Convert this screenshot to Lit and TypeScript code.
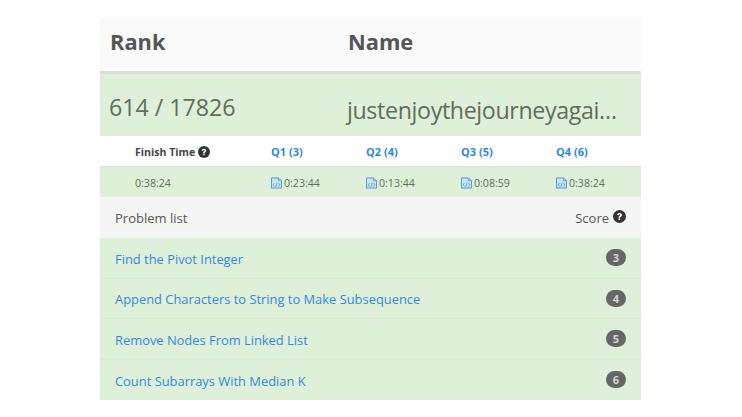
import { LitElement, html, css, svg } from "lit";
import { customElement } from "lit/decorators.js";

const help = html`<svg class="help" viewBox="0 0 24 24" aria-hidden="true"><circle cx="12" cy="12" r="12" fill="currentColor"/><path d="M7.6 9.3c.2-2.5 2-3.9 4.5-3.9 2.6 0 4.5 1.5 4.5 3.7 0 1.6-.9 2.4-2.1 3.2-1 .7-1.3 1.1-1.3 2v.2h-3v-.6c0-1.6.7-2.4 1.8-3.2.9-.6 1.4-1 1.4-1.7s-.6-1.2-1.3-1.2c-.9 0-1.4.6-1.5 1.7z" fill="#fff"/><rect x="10.2" y="15.4" width="3" height="3" fill="#fff"/></svg>`;

const fileIcon = html`<svg class="file" viewBox="0 0 12 12" aria-hidden="true">${svg`<path d="M.5.5h7.5l3.5 3v8H.5z" fill="#cfe3f4" stroke="#3f93e0" stroke-width="1"/><path d="M8 .5v3h3.5" fill="none" stroke="#3f93e0" stroke-width=".8"/><path d="M3.8 6 2.4 8l1.4 2M8.2 6l1.4 2-1.4 2M6.7 5.5 5.3 10.5" fill="none" stroke="#3f93e0" stroke-width=".8"/>`}</svg>`;

const questions = [
  { label: "Q1 (3)", time: "0:23:44" },
  { label: "Q2 (4)", time: "0:13:44" },
  { label: "Q3 (5)", time: "0:08:59" },
  { label: "Q4 (6)", time: "0:38:24" },
];
const problems = [
  { name: "Find the Pivot Integer", score: 3 },
  { name: "Append Characters to String to Make Subsequence", score: 4 },
  { name: "Remove Nodes From Linked List", score: 5 },
  { name: "Count Subarrays With Median K", score: 6 },
];

@customElement("app-root")
export class AppRoot extends LitElement {
  static styles = css`
    :host {
      display: block;
      height: 417px;
      overflow: hidden;
      background: #fff;
      font-family: "Open Sans", "Noto Sans", sans-serif;
      color: #555;
    }
    .wrap {
      margin: 0 101px 0 100px;
      padding-top: 17px;
    }
    .head {
      background: #f9f9f9;
      border-bottom: 3px solid #ddd;
      height: 54px;
      box-sizing: content-box;
      display: grid;
      grid-template-columns: 238px 1fr;
      align-items: center;
      font-size: 21.8px;
      font-weight: 700;
      color: #555;
      line-height: 50px;
    }
    .head span { padding: 0 9px 6px 10px; }
    .main {
      background: #dff0d8;
      height: 62px;
      box-sizing: border-box;
      padding-top: 4px;
      display: grid;
      grid-template-columns: 238px 1fr;
      align-items: center;
      font-size: 23.2px;
      color: #5e6e59;
    }
    .main span {
      padding: 0 9px;
      white-space: nowrap;
    }
    .main .name {
      padding-top: 5px;
      letter-spacing: -0.35px;
    }
    .qrow, .trow {
      display: grid;
      grid-template-columns: 163px repeat(4, 95px);
      align-items: center;
    }
    .qrow {
      padding-top: 1px;
      box-sizing: content-box;
      height: 29px;
      border-bottom: 1px solid #ddd;
      font-weight: 700;
      font-size: 11px;
      background: #fff;
    }
    .qrow > *, .trow > * { padding-left: 8px; display: flex; align-items: center; }
    .qrow > :first-child, .trow > :first-child { padding-left: 35px; }
    .qrow a { color: #2f86dc; text-decoration: none; }
    .qrow .ft { color: #444; gap: 3px; font-size: 10.6px; }
    .help { width: 12px; height: 12px; color: #333; flex: none; }
    .trow {
      height: 30px;
      padding-top: 1px;
      box-sizing: border-box;
      background: #dff0d8;
      color: #5e6e59;
      font-size: 10.6px;
    }
    .file { width: 11px; height: 12px; margin-right: 2px; flex: none; }
    .panel-head {
      height: 41px;
      background: #f5f5f5;
      display: flex;
      justify-content: space-between;
      align-items: center;
      padding: 0 15px;
      font-size: 13px;
      color: #555;
    }
    .score { display: flex; align-items: center; gap: 4px; }
    .score .help { width: 13px; height: 13px; margin-top: -3px; }
    .item {
      height: 40.6px;
      box-sizing: border-box;
      border-bottom: 1px solid #d8ead0;
      background: #dff0d8;
      display: flex;
      justify-content: space-between;
      align-items: center;
      padding: 0 15px;
      font-size: 12.9px;
    }
    .item:last-child { border-bottom: none; height: 40px; }
    .item a { color: #3289e0; text-decoration: none; padding-top: 2px; }
    .badge {
      width: 20px;
      height: 17px;
      border-radius: 10px;
      background: #666;
      color: #d5d5d5;
      font-size: 11px;
      font-weight: 700;
      display: flex;
      align-items: center;
      justify-content: center;
    }
  `;

  render() {
    return html`<div class="wrap">
      <div class="head"><span>Rank</span><span>Name</span></div>
      <div class="main"><span>614 / 17826</span><span class="name">justenjoythejourneyagai…</span></div>
      <div class="qrow">
        <div class="ft">Finish Time ${help}</div>
        ${questions.map((q) => html`<div><a href="#">${q.label}</a></div>`)}
      </div>
      <div class="trow">
        <div>0:38:24</div>
        ${questions.map((q) => html`<div>${fileIcon}${q.time}</div>`)}
      </div>
      <div class="panel-head"><span>Problem list</span><span class="score">Score ${help}</span></div>
      ${problems.map(
        (p) => html`<div class="item"><a href="#">${p.name}</a><span class="badge">${p.score}</span></div>`
      )}
    </div>`;
  }
}
